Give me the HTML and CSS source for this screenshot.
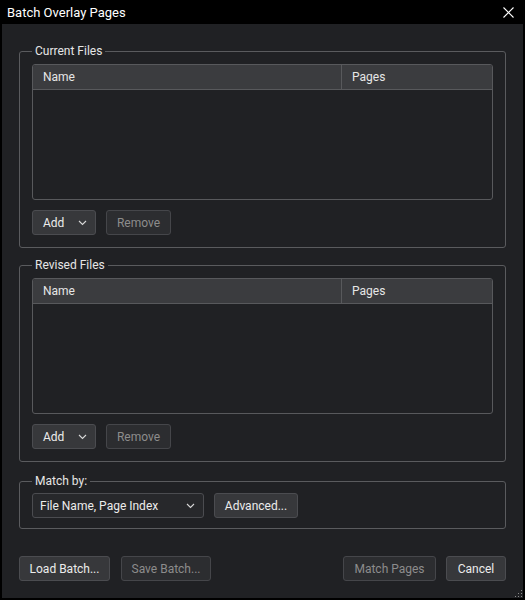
FILE: index.html
```html
<!DOCTYPE html>
<html>
<head>
<meta charset="utf-8">
<link rel="stylesheet" href="styles.css">
</head>
<body>
<div class="window">
  <div class="titlebar">
    <span class="title">Batch Overlay Pages</span>
    <svg class="close" width="11" height="11" viewBox="0 0 11 11"><path d="M0.5 0.5 L10.5 10.5 M10.5 0.5 L0.5 10.5" stroke="#ffffff" stroke-width="1.1" fill="none"/></svg>
  </div>
  <div class="content">
    <fieldset class="group files">
      <legend>Current Files</legend>
      <div class="table">
        <div class="thead">
          <div class="col name">Name</div>
          <div class="col pages">Pages</div>
        </div>
      </div>
      <div class="row">
        <button class="btn drop add">Add<svg class="chev" width="9" height="6" viewBox="0 0 9 6"><path d="M1 1 L4.5 4.5 L8 1" stroke="#d8d8d8" stroke-width="1.1" fill="none"/></svg></button>
        <button class="btn disabled remove">Remove</button>
      </div>
    </fieldset>
    <fieldset class="group files">
      <legend>Revised Files</legend>
      <div class="table">
        <div class="thead">
          <div class="col name">Name</div>
          <div class="col pages">Pages</div>
        </div>
      </div>
      <div class="row">
        <button class="btn drop add">Add<svg class="chev" width="9" height="6" viewBox="0 0 9 6"><path d="M1 1 L4.5 4.5 L8 1" stroke="#d8d8d8" stroke-width="1.1" fill="none"/></svg></button>
        <button class="btn disabled remove">Remove</button>
      </div>
    </fieldset>
    <fieldset class="group match">
      <legend>Match by:</legend>
      <div class="row first">
        <button class="btn combo">File Name, Page Index<svg class="chev" width="9" height="6" viewBox="0 0 9 6"><path d="M1 1 L4.5 4.5 L8 1" stroke="#d8d8d8" stroke-width="1.1" fill="none"/></svg></button>
        <button class="btn advanced">Advanced...</button>
      </div>
    </fieldset>
    <div class="footer">
      <button class="btn load">Load Batch...</button>
      <button class="btn disabled save">Save Batch...</button>
      <div class="spacer"></div>
      <button class="btn disabled matchpages">Match Pages</button>
      <button class="btn cancel">Cancel</button>
    </div>
    <svg class="grip" width="9" height="9" viewBox="0 0 9 9">
      <rect x="7" y="1" width="1" height="1" fill="#8a8a8a"/>
      <rect x="4" y="4" width="1" height="1" fill="#8a8a8a"/>
      <rect x="7" y="4" width="1" height="1" fill="#8a8a8a"/>
      <rect x="1" y="7" width="1" height="1" fill="#8a8a8a"/>
      <rect x="4" y="7" width="1" height="1" fill="#8a8a8a"/>
      <rect x="7" y="7" width="1" height="1" fill="#8a8a8a"/>
    </svg>
  </div>
</div>
</body>
</html>
```

FILE: styles.css
```css
html, body {
  margin: 0;
  padding: 0;
  background: #000000;
}
.window {
  width: 525px;
  height: 600px;
  display: flex;
  flex-direction: column;
  font-family: Roboto, "Liberation Sans", sans-serif;
  font-size: 12px;
  color: #e6e6e6;
  background: #000000;
}
.titlebar {
  height: 24px;
  flex: none;
  display: flex;
  align-items: center;
  padding: 0 11px 0 7px;
}
.title {
  flex: 1;
  font-size: 13px;
  color: #ffffff;
}
.close {
  display: block;
}
.content {
  flex: 1;
  margin: 0 2px 2px 2px;
  background: #202124;
  padding: 19px 17px 0 17px;
  position: relative;
  display: flex;
  flex-direction: column;
}
.group {
  margin: 0;
  border: 1px solid #5a5b5e;
  border-radius: 3px;
  padding: 5px 12px 12px 12px;
  min-width: 0;
}
.group + .group {
  margin-top: 9px;
}
.group.match {
  margin-top: 11px;
  padding-top: 4px;
  padding-bottom: 10px;
}
.group legend {
  padding: 0 3px;
  line-height: 16px;
  height: 16px;
  color: #e6e6e6;
}
.table {
  height: 134px;
  border: 1px solid #58595c;
  border-radius: 3px;
  background: #202124;
  overflow: hidden;
}
.thead {
  display: flex;
  height: 24px;
  background: #3b3c3f;
  border-bottom: 1px solid #58595c;
}
.col {
  display: flex;
  align-items: center;
  padding-left: 10px;
  color: #e6e6e6;
}
.col.name {
  width: 298px;
  border-right: 1px solid #58595c;
}
.col.pages {
  flex: 1;
}
.row {
  display: flex;
  gap: 10px;
  margin-top: 10px;
}
.row.first {
  margin-top: 0;
}
.btn {
  box-sizing: border-box;
  height: 25px;
  border: 1px solid #4b4c50;
  border-radius: 3px;
  background: #37383b;
  color: #ececec;
  font-family: Roboto, "Liberation Sans", sans-serif;
  font-size: 12px;
  padding: 0 8px;
  display: flex;
  align-items: center;
  justify-content: center;
  margin: 0;
}
.btn.disabled {
  color: #8c8c8c;
  background: #2c2d30;
  border-color: #45464a;
}
.btn.drop {
  justify-content: space-between;
  padding: 0 8px 0 10px;
}
.add {
  width: 64px;
}
.remove {
  width: 65px;
}
.combo {
  width: 172px;
  justify-content: space-between;
  padding: 0 8px 0 7px;
  background: #27282b;
}
.advanced {
  width: 84px;
}
.footer {
  display: flex;
  gap: 11px;
  margin-top: 27px;
}
.spacer {
  flex: 1;
}
.load {
  width: 91px;
}
.save {
  width: 90px;
}
.matchpages {
  width: 93px;
  margin-right: -1px;
}
.cancel {
  width: 60px;
}
.grip {
  position: absolute;
  right: 0;
  bottom: 0;
}
```
